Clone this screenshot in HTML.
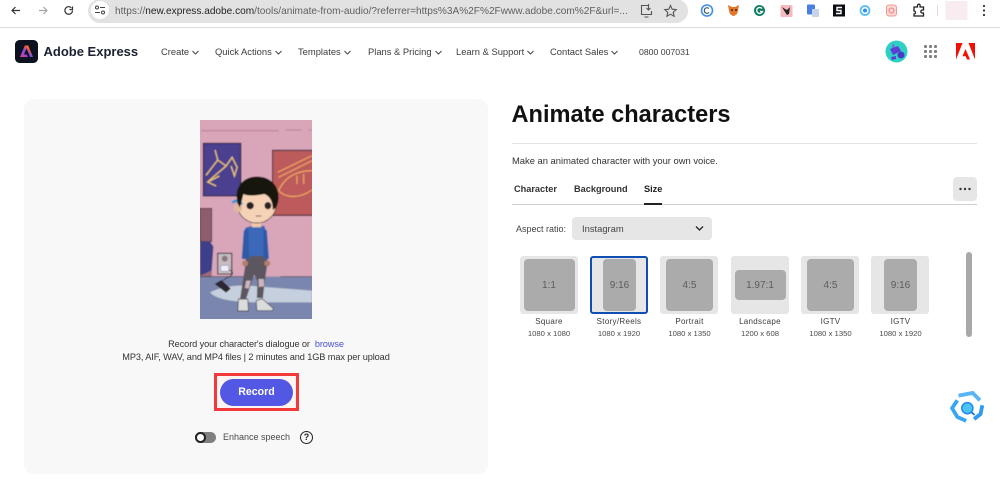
<!DOCTYPE html>
<html lang="en"><head><meta charset="utf-8"><title>Adobe Express</title>
<style>
*{box-sizing:border-box}
html,body{margin:0;padding:0;width:1000px;height:496px;overflow:hidden;background:#fff;font-family:"Liberation Sans",sans-serif;color:#2c2c2c}
.a{position:absolute;white-space:nowrap}
.nav{top:46px;font-size:9.4px;color:#3c3c3c;line-height:12px}
.nav svg{margin-left:3px;vertical-align:-1px}
.tile{position:absolute;top:256px;width:58px;height:58px;background:#e6e6e6;border-radius:3px}
.in{position:absolute;background:#ababab;border-radius:4px;display:flex;align-items:center;justify-content:center;font-size:10px;color:#5c5c5c}
.l1,.l2{position:absolute;text-align:center;width:80px;color:#3c3c3c;line-height:10px}
.l1{top:317px;font-size:8px;letter-spacing:.3px}.l2{top:329px;font-size:7.7px;color:#4a4a4a}
</style></head><body>
<!-- toolbar -->
<svg class="a" style="left:0;top:0" width="90" height="22" viewBox="0 0 90 22" fill="none" stroke="#333" stroke-width="1.2">
<path d="M20 10.500H12M15.500 7L12 10.500L15.500 14"/>
<path d="M47 10.500H39M43.500 7L47 10.500L43.500 14" stroke="#a5a5a5"/>
<path d="M72.500 10.500a3.800 3.800 0 1 1-1.200-2.800M72.500 6.500v3h-3"/>
</svg>
<div class="a" style="left:88px;top:-1px;width:600px;height:24px;background:#e2e2e2;border-radius:12px"></div>
<div class="a" style="left:91px;top:1px;width:18px;height:18px;background:#fff;border-radius:50%"></div>
<svg class="a" style="left:94px;top:4px" width="12" height="12" viewBox="0 0 12 12" fill="none" stroke="#444" stroke-width="1"><circle cx="3" cy="3.500" r="1.500"/><path d="M6 3.500h5M1 8.500h5"/><circle cx="9" cy="8.500" r="1.500"/></svg>
<div class="a" style="left:115px;top:5px;font-size:10.1px;line-height:13px;color:#5f5f5f">https://<span style="color:#222">new.express.adobe.com</span>/tools/animate-from-audio/?referrer=https%3A%2F%2Fwww.adobe.com%2F&amp;url=...</div>
<svg class="a" style="left:640px;top:3px" width="40" height="16" viewBox="0 0 40 16" fill="none" stroke="#555" stroke-width="1.100">
<path d="M9 2.500H1.500v9h10V8M4.500 14h4M8.500 1v6M6.500 5l2 2 2-2"/>
<path d="M30.500 2.500l1.700 3.700 4 .4-3 2.700.9 4-3.600-2.100-3.600 2.100.9-4-3-2.700 4-.4z"/>
</svg>
<!-- extensions -->
<svg class="a" style="left:695px;top:0" width="305" height="22" viewBox="695 0 305 22">
<circle cx="707" cy="10.500" r="5.500" fill="#fff" stroke="#3f8fe8" stroke-width="1.600"/><path d="M709 8.500a2.800 2.800 0 1 0 0 4" fill="none" stroke="#245" stroke-width="1"/>
<path d="M728 5l4 2h3l4-2-1 6-1 3-3 2h-1l-3-2-1-3z" fill="#e2762a"/><path d="M731 9h2v2h-2zM735 9h2v2h-2z" fill="#6b3a10"/>
<circle cx="759.500" cy="10.500" r="5.500" fill="#0f7d63"/><path d="M762 8.500a3 3 0 1 0 .5 3h-2.500" fill="none" stroke="#fff" stroke-width="1.300"/>
<rect x="780.500" y="5" width="12" height="12" rx="1" fill="#f6b9bf"/><path d="M782 7l3 2 2 1 3-3-1 7-2 1-2-3z" fill="#222"/>
<rect x="807" y="4.500" width="8" height="10" rx="1" fill="#4a7fe0"/><rect x="812" y="9" width="7" height="8" rx="1" fill="#c6d4ea"/>
<rect x="833" y="4.500" width="12" height="12" fill="#0c0c14"/><path d="M842 7.500h-5v3h4v3h-5" fill="none" stroke="#fff" stroke-width="1.400"/>
<circle cx="865" cy="10.500" r="4.500" fill="none" stroke="#58bdf5" stroke-width="1.800"/><circle cx="865" cy="10.500" r="2" fill="#2b90ee"/>
<rect x="886.500" y="5" width="10" height="11" rx="2.500" fill="#fbd9d2" stroke="#f29a8c"/><circle cx="891.500" cy="10.500" r="2.500" fill="none" stroke="#ee7a8c"/>
<path d="M914 7h3.500v-1.500a1.300 1.300 0 0 1 2.600 0V7h3.400v3h-1.200a1.500 1.500 0 0 0 0 3h1.200v3h-9.500v-2a1.500 1.500 0 0 0 0-3z" fill="none" stroke="#222" stroke-width="1.300"/>
<rect x="937" y="5" width="1" height="11" fill="#f7cfe0"/>
<rect x="945.500" y="1" width="22" height="19" fill="#f9ecf1"/>
<circle cx="984" cy="6" r="1.100" fill="#333"/><circle cx="984" cy="10.500" r="1.100" fill="#333"/><circle cx="984" cy="15" r="1.100" fill="#333"/>
</svg>
<div class="a" style="left:0;top:27px;width:1000px;height:1px;background:#dcdcdc"></div>
<!-- header -->
<svg class="a" style="left:15px;top:40px" width="23" height="23" viewBox="0 0 23 23"><defs><linearGradient id="g" x1="0" y1="1" x2="1" y2="0"><stop offset="0" stop-color="#e83a8c"/><stop offset=".45" stop-color="#7a4df0"/><stop offset=".7" stop-color="#ff5b2e"/><stop offset="1" stop-color="#ffc72c"/></linearGradient></defs><rect width="23" height="23" rx="4.500" fill="#0d1220"/><path d="M9.800 5.500h3.400L18 17h-3l-1-2.600-2.500-6-2.500 6.100 2.800 0 1 2.500H5z" fill="url(#g)"/></svg>
<div class="a" style="left:43.500px;top:43px;font-size:13px;line-height:17px;font-weight:bold;color:#1b2130">Adobe Express</div>
<div class="a nav" style="left:161px">Create<svg width="7" height="7" viewBox="0 0 7 7" fill="none" stroke="#444"><path d="M.5 2l3 3 3-3"/></svg></div>
<div class="a nav" style="left:215px">Quick Actions<svg width="7" height="7" viewBox="0 0 7 7" fill="none" stroke="#444"><path d="M.5 2l3 3 3-3"/></svg></div>
<div class="a nav" style="left:298px">Templates<svg width="7" height="7" viewBox="0 0 7 7" fill="none" stroke="#444"><path d="M.5 2l3 3 3-3"/></svg></div>
<div class="a nav" style="left:368px">Plans &amp; Pricing<svg width="7" height="7" viewBox="0 0 7 7" fill="none" stroke="#444"><path d="M.5 2l3 3 3-3"/></svg></div>
<div class="a nav" style="left:456px">Learn &amp; Support<svg width="7" height="7" viewBox="0 0 7 7" fill="none" stroke="#444"><path d="M.5 2l3 3 3-3"/></svg></div>
<div class="a nav" style="left:550px">Contact Sales<svg width="7" height="7" viewBox="0 0 7 7" fill="none" stroke="#444"><path d="M.5 2l3 3 3-3"/></svg></div>
<div class="a nav" style="left:639px;font-size:8.700px">0800 007031</div>
<svg class="a" style="left:885px;top:40px" width="23" height="23" viewBox="0 0 23 23"><circle cx="11.500" cy="11.500" r="11" fill="#2fd0c4"/><path d="M5 9l8-3 3 5-8 4z" fill="#5b3fd8"/><path d="M8 3l2 4-3 1z" fill="#7b62e8"/><circle cx="16" cy="15" r="3.500" fill="#4b38c8"/><path d="M6 17l5-1 0 3-4 1z" fill="#5b3fd8"/></svg>
<svg class="a" style="left:924px;top:45px" width="13" height="13" viewBox="0 0 13 13" fill="#808080"><rect x="0" y="0" width="3" height="3" rx="1"/><rect x="5" y="0" width="3" height="3" rx="1"/><rect x="10" y="0" width="3" height="3" rx="1"/><rect x="0" y="5" width="3" height="3" rx="1"/><rect x="5" y="5" width="3" height="3" rx="1"/><rect x="10" y="5" width="3" height="3" rx="1"/><rect x="0" y="10" width="3" height="3" rx="1"/><rect x="5" y="10" width="3" height="3" rx="1"/><rect x="10" y="10" width="3" height="3" rx="1"/></svg>
<svg class="a" style="left:956px;top:43px" width="19" height="17" viewBox="0 0 19 17" fill="#f40f02"><path d="M0 0h6.500L0 16.500zM12.500 0H19v16.500zM9.500 6l4.500 10.500h-3l-1.300-3.300H6.500z"/></svg>
<!-- left panel -->
<div class="a" style="left:24px;top:99px;width:464px;height:375px;background:#f8f8f8;border-radius:10px"></div>
<svg class="a" style="left:200px;top:119.500px" width="112" height="199" viewBox="30 28 335 597" preserveAspectRatio="none">
<defs><filter id="b" x="-5%" y="-5%" width="110%" height="110%"><feGaussianBlur stdDeviation="1.400"/></filter></defs>
<g filter="url(#b)">
<rect x="20" y="18" width="355" height="617" fill="#d8a5b9"/>
<path d="M34 60H265M285 58h50M355 58h10" stroke="#b77f93" stroke-width="3" fill="none"/>
<rect x="40" y="98" width="112" height="158" fill="#4c3f8f" stroke="#262030" stroke-width="3"/>
<path d="M75 118l8 30 25 18-35 30-20 18 25 12M83 148l-35 46M108 166l18-26 15 30-8 26-10-30M53 214l35-18" stroke="#e9c26e" stroke-width="4" fill="none"/>
<rect x="247" y="119" width="125" height="195" fill="#bd5a5c" stroke="#262030" stroke-width="3"/>
<path d="M262 185l103-50M265 200l100-50M265 240c20-45 60-60 100-60M265 240c25 25 65 22 100-2M320 195v25M340 190l0 30" stroke="#eba362" stroke-width="4" fill="none"/>
<rect x="30" y="293" width="35" height="100" fill="#8d5d6e" stroke="#2d2228" stroke-width="2"/>
<path d="M30 393h30l10 15-5 72-35 18z" fill="#3d4188"/><path d="M30 495l35-15v18l-35 35z" fill="#9a6c7b"/>
<path d="M20 498H375V635H20z" fill="#7a86ad"/>
<path d="M30 498h135M270 498h95" stroke="#2d2b38" stroke-width="2"/>
<path d="M60 545c30-15 70-22 115-20l190 15v35H210c-60 0-130-5-150-30z" fill="#c6cfdd"/>
<rect x="83" y="428" width="42" height="62" fill="#c8bcc0" stroke="#2d2b38" stroke-width="3"/>
<circle cx="104" cy="444" r="9" fill="#887a80"/><rect x="92" y="464" width="24" height="18" rx="3" fill="#eef" stroke="#445"/>
<path d="M118 478c15 5 10 18-5 22l-15 10" stroke="#222" stroke-width="2.500" fill="none"/>
<path d="M74 520l20-12 28 26-14 12z" fill="#2a2830"/>
<path d="M168 425h62l2 30-8 55-6 52h-18l2-50-10-20-24 72h-18l14-90z" fill="#5b5660"/>
<path d="M168 510l14 0-6 24-12-2zM205 505l16 0 1 22-16 2z" fill="#cdb5bd"/>
<path d="M145 565h28l2 36h-32zM198 570l18-6 34 30-4 6h-46z" fill="#dcdcdc" stroke="#2a2a30" stroke-width="2"/>
<path d="M165 352l24-8 34 2 8 40 2 50-70 0z" fill="#3b67b8"/>
<path d="M155 445l6-85 14-8 2 92zM236 445l-6-85-10-8 0 92z" fill="#2f5aa8"/>
<circle cx="165" cy="458" r="9" fill="#b07f6d"/><circle cx="231" cy="458" r="9" fill="#b07f6d"/>
<rect x="185" y="325" width="28" height="25" fill="#f0c8a8"/>
<ellipse cx="200" cy="282" rx="58" ry="55" fill="#f6d3b6" stroke="#2d2226" stroke-width="2"/>
<circle cx="143" cy="292" r="13" fill="#e0b8a0"/>
<path d="M127 276c10-9 22-7 28 6" stroke="#1793d1" stroke-width="7" fill="none"/>
<path d="M148 290c-24-52 8-94 55-92 54 2 74 52 55 92l-10 8c0-28-10-42-26-48-28 6-52 6-62 0-5 15-5 28-12 40z" fill="#14120f"/>
<ellipse cx="180" cy="285" rx="11" ry="11" fill="#2b2422"/><ellipse cx="233" cy="285" rx="10" ry="11" fill="#2b2422"/>
<path d="M197 316h16" stroke="#5a3030" stroke-width="2.500"/>
</g>
</svg>
<div class="a" style="left:24px;width:464px;top:338px;text-align:center;font-size:9.200px;line-height:12px;color:#333;letter-spacing:-.1px">Record your character's dialogue or &nbsp;<span style="color:#4e52d6">browse</span></div>
<div class="a" style="left:24px;width:464px;top:351px;text-align:center;font-size:9.200px;line-height:12px;color:#333;letter-spacing:-.1px">MP3, AIF, WAV, and MP4 files | 2 minutes and 1GB max per upload</div>
<div class="a" style="left:214px;top:373px;width:85px;height:38px;border:3.500px solid #f23a3a;background:#fdf3f3"></div>
<div class="a" style="left:220px;top:379px;width:73px;height:27px;border-radius:14px;background:#5258e4;color:#fff;font-size:10.6px;font-weight:bold;line-height:26px;text-align:center">Record</div>
<div class="a" style="left:195px;top:432px;width:21px;height:11px;border-radius:6px;background:#808080"></div>
<div class="a" style="left:195px;top:432px;width:11px;height:11px;border-radius:50%;background:#fff;border:2px solid #222"></div>
<div class="a" style="left:223px;top:431px;font-size:9px;line-height:12px;color:#4a4a4a">Enhance speech</div>
<div class="a" style="left:300px;top:431px;width:13px;height:13px;border-radius:50%;border:1.500px solid #222;font-size:9px;font-weight:bold;line-height:10px;text-align:center;color:#222">?</div>
<!-- right -->
<div class="a" style="left:511.500px;top:99px;font-size:23.600px;line-height:33px;font-weight:bold;color:#111">Animate characters</div>
<div class="a" style="left:512px;top:143px;width:465px;height:1px;background:#e4e4e4"></div>
<div class="a" style="left:512px;top:155px;font-size:9.400px;line-height:12px;color:#333">Make an animated character with your own voice.</div>
<div class="a" style="left:514px;top:182.500px;font-size:9.200px;line-height:12px;font-weight:bold;color:#333">Character</div>
<div class="a" style="left:574px;top:182.500px;font-size:9.200px;line-height:12px;font-weight:bold;color:#333">Background</div>
<div class="a" style="left:644px;top:182.500px;font-size:9.200px;line-height:12px;font-weight:bold;color:#222">Size</div>
<div class="a" style="left:512px;top:204px;width:465px;height:1px;background:#cfcfcf"></div>
<div class="a" style="left:644px;top:203px;width:18px;height:2px;background:#222"></div>
<div class="a" style="left:953px;top:177px;width:24px;height:24px;background:#e6e6e6;border-radius:4px"></div>
<svg class="a" style="left:959px;top:187px" width="12" height="4" fill="#333"><circle cx="1.500" cy="2" r="1.200"/><circle cx="6" cy="2" r="1.200"/><circle cx="10.500" cy="2" r="1.200"/></svg>
<div class="a" style="left:516px;top:222.500px;font-size:9px;line-height:12px;color:#444">Aspect ratio:</div>
<div class="a" style="left:572px;top:217px;width:140px;height:23px;background:#e6e6e6;border-radius:4px"></div>
<div class="a" style="left:582px;top:223px;font-size:9.400px;line-height:12px;color:#444">Instagram</div>
<svg class="a" style="left:695px;top:225px" width="9" height="7" fill="none" stroke="#222" stroke-width="1.300"><path d="M1 1.500l3.500 3.500 3.500-3.500"/></svg>
<!-- tiles -->
<div class="tile" style="left:520px"><div class="in" style="left:3.500px;top:3px;width:51px;height:52px">1:1</div></div>
<div class="tile" style="left:590px;background:#e6e6e6;border:2px solid #0f4fb4"><div class="in" style="left:11px;top:1px;width:33px;height:52px">9:16</div></div>
<div class="tile" style="left:660px"><div class="in" style="left:6px;top:3px;width:47px;height:52px">4:5</div></div>
<div class="tile" style="left:731px"><div class="in" style="left:3.500px;top:14px;width:51px;height:30px">1.97:1</div></div>
<div class="tile" style="left:801px"><div class="in" style="left:6px;top:3px;width:47px;height:52px">4:5</div></div>
<div class="tile" style="left:871px"><div class="in" style="left:13px;top:3px;width:33px;height:52px">9:16</div></div>
<div class="l1" style="left:509px">Square</div><div class="l2" style="left:509px">1080 x 1080</div>
<div class="l1" style="left:579px">Story/Reels</div><div class="l2" style="left:579px">1080 x 1920</div>
<div class="l1" style="left:649.500px">Portrait</div><div class="l2" style="left:649.500px">1080 x 1350</div>
<div class="l1" style="left:720px">Landscape</div><div class="l2" style="left:720px">1200 x 608</div>
<div class="l1" style="left:790.500px">IGTV</div><div class="l2" style="left:790.500px">1080 x 1350</div>
<div class="l1" style="left:860.500px">IGTV</div><div class="l2" style="left:860.500px">1080 x 1920</div>
<div class="a" style="left:966px;top:252px;width:6px;height:85px;background:#a9a9a9;border-radius:3px"></div>
<!-- floating widget -->
<svg class="a" style="left:940px;top:380px" width="50" height="50" viewBox="0 0 150 150" fill="none"><g transform="translate(82 82) scale(.88) translate(-82 -82)"><path d="M52 42L100 33L125 58" stroke="#58b4f5" stroke-width="13"/><path d="M133 75L127 105L105 122" stroke="#2f9bf0" stroke-width="13"/><path d="M48 58L30 85L48 115L78 128" stroke="#3aa6f2" stroke-width="13"/><circle cx="82" cy="85" r="19" fill="#4cc4f2" stroke="#1c8ae8" stroke-width="5"/><path d="M96 99L107 108" stroke="#1c6fd8" stroke-width="6"/></g></svg>
</body></html>
